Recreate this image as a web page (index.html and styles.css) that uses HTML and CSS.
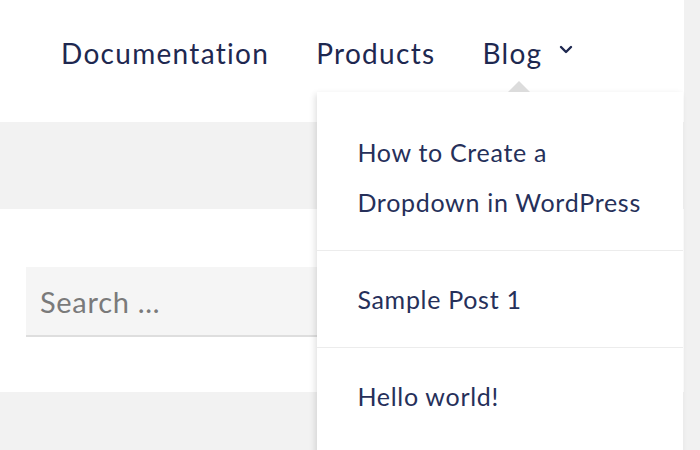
FILE: index.html
```html
<!DOCTYPE html>
<html lang="en">
<head>
    <meta charset="UTF-8">
    <title>Blog dropdown</title>
    <link rel="stylesheet" href="styles.css">
</head>
<body>
    <div class="wrap">
        <div class="page">
            <header class="header">
                <nav class="nav">
                    <a href="#" class="nav-link">Documentation</a>
                    <a href="#" class="nav-link">Products</a>
                    <div class="nav-item">
                        <a href="#" class="nav-link">Blog</a>
                        <svg class="chevron" width="14" height="9" viewBox="0 0 14 9">
                            <path d="M2 2 L7 7 L12 2" fill="none" stroke="#1e2850" stroke-width="2.4" stroke-linecap="round" stroke-linejoin="round"/>
                        </svg>
                        <div class="dropdown">
                            <span class="arrow"></span>
                            <a href="#" class="drop-link">How to Create a Dropdown in WordPress</a>
                            <a href="#" class="drop-link">Sample Post 1</a>
                            <a href="#" class="drop-link">Hello world!</a>
                        </div>
                    </div>
                </nav>
            </header>
            <div class="band"></div>
            <section class="search-area">
                <input type="search" class="search" placeholder="Search &hellip;">
            </section>
            <div class="band band-bottom"></div>
        </div>
        <div class="edge"></div>
    </div>
</body>
</html>
```

FILE: styles.css
```css
body {
    margin: 0;
    font-family: Lato, "Open Sans", sans-serif;
    background: #fff;
}
.wrap {
    display: flex;
    height: 450px;
    overflow: hidden;
}
.page {
    flex: 1;
    display: flex;
    flex-direction: column;
}
.edge {
    width: 16px;
    background: #f1f1f1;
}
.header {
    height: 122px;
    background: #fff;
}
.nav {
    display: flex;
    align-items: center;
    gap: 47px;
    padding: 33px 0 0 61px;
}
.nav-link {
    color: #1e2850;
    text-decoration: none;
    font-size: 28px;
    letter-spacing: 1.3px;
    line-height: 40px;
}
.nav-item {
    display: flex;
    align-items: center;
    gap: 17px;
    position: relative;
}
.chevron {
    margin-top: -8px;
}
.dropdown {
    position: absolute;
    top: 59px;
    left: -165px;
    width: 366px;
    padding: 12px 0 40px;
    background: #fff;
    box-shadow: -2px 2px 6px rgba(0, 0, 0, 0.12);
    z-index: 2;
}
.arrow {
    position: absolute;
    top: -11px;
    left: 191px;
    width: 0;
    height: 0;
    border-left: 11px solid transparent;
    border-right: 11px solid transparent;
    border-bottom: 11px solid #dcdcdc;
}
.drop-link {
    display: block;
    padding: 23px 40px 23px 40px;
    color: #26305a;
    text-decoration: none;
    font-size: 25px;
    letter-spacing: 0.7px;
    line-height: 50px;
    border-bottom: 1px solid #ececec;
}
.drop-link:last-child {
    border-bottom: none;
}
.band {
    height: 87px;
    background: #f2f2f2;
}
.band-bottom {
    flex: 1;
}
.search-area {
    height: 183px;
    padding: 58px 0 0 26px;
    box-sizing: border-box;
}
.search {
    width: 420px;
    height: 70px;
    box-sizing: border-box;
    border: none;
    border-bottom: 2px solid #dedede;
    background: #f5f5f5;
    padding: 0 14px;
    font-family: Lato, "Open Sans", sans-serif;
    font-size: 29px;
    letter-spacing: 0.7px;
    color: #333;
    outline: none;
}
.search::placeholder {
    color: #7a7a7a;
}
```
